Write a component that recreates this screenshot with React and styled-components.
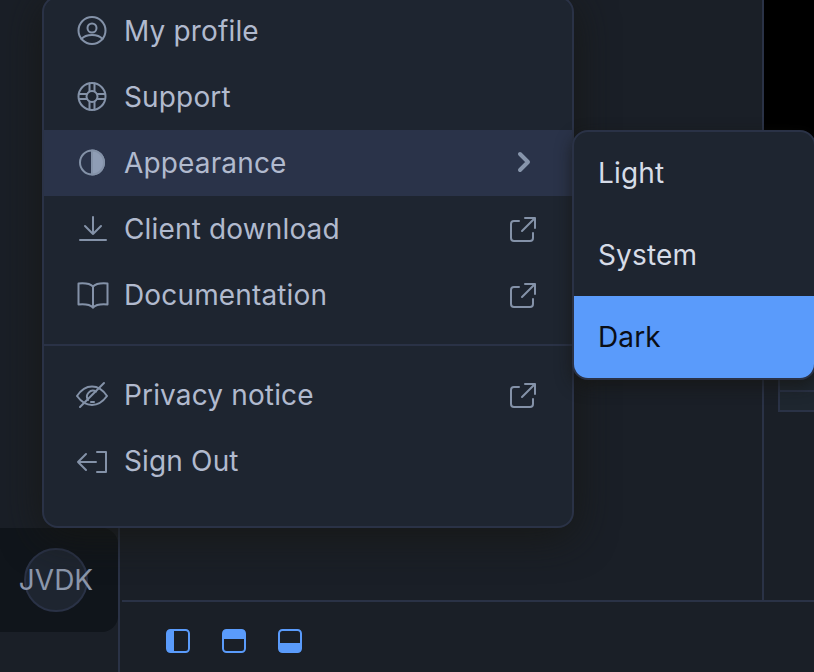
import React from "react";
import styled, { createGlobalStyle } from "styled-components";

const Global = createGlobalStyle`
  html, body { margin: 0; padding: 0; height: 100%; background: #1a1f27; }
  #root { height: 100%; }
  * { box-sizing: border-box; }
`;

const line = "#2a3246";

const Page = styled.div`
  position: relative;
  display: flex;
  width: 814px;
  height: 672px;
  overflow: hidden;
  font-family: Inter, "Liberation Sans", sans-serif;
  background: #1a1f27;
`;

const Rail = styled.aside`
  width: 120px;
  flex: none;
  display: flex;
  flex-direction: column;
  justify-content: flex-end;
  padding-bottom: 40px;
  border-right: 2px solid ${line};
`;

const AvatarSlot = styled.div`
  height: 104px;
  display: flex;
  align-items: center;
  justify-content: center;
  padding-right: 6px;
  background: #10151b;
  border-radius: 0 16px 16px 0;
`;

const Avatar = styled.div`
  width: 64px;
  height: 64px;
  display: flex;
  align-items: center;
  justify-content: center;
  border-radius: 50%;
  background: #1e2530;
  border: 2px solid ${line};
  color: #8c97ab;
  font-size: 28px;
  white-space: nowrap;
`;

const Main = styled.main`
  flex: 1;
  min-width: 0;
  display: flex;
  flex-direction: column;
`;

const Content = styled.div`
  flex: 1;
  min-height: 0;
  display: flex;
  padding-left: 2px;
`;

const Center = styled.div`
  flex: 1;
  border-right: 2px solid ${line};
`;

const Side = styled.div`
  width: 50px;
  flex: none;
  display: flex;
  flex-direction: column;
  padding-bottom: 188px;
`;

const BlackPanel = styled.div`
  flex: 1;
  background: #000;
`;

const TableStub = styled.div`
  height: 42px;
  margin-left: 14px;
  background: #1e262f;
  border: 2px solid ${line};
  border-width: 0 0 2px 2px;
  display: flex;
  flex-direction: column;
`;

const TableRow = styled.div`
  height: 22px;
  border-bottom: 2px solid ${line};
`;

const BottomBar = styled.footer`
  height: 72px;
  flex: none;
  display: flex;
  align-items: center;
  gap: 32px;
  padding: 0 0 0 44px;
  margin-left: 2px;
  border-top: 2px solid ${line};
`;

const PanelIcon = styled.svg`
  width: 24px;
  height: 24px;
  display: block;
  margin-top: 8px;
`;

const Menu = styled.nav`
  position: absolute;
  left: 42px;
  bottom: 144px;
  width: 532px;
  padding-bottom: 32px;
  background: #1e2530;
  border: 2px solid ${line};
  border-radius: 16px;
  box-shadow: 0 8px 40px rgba(22, 22, 18, 0.8);
`;

const Row = styled.div`
  position: relative;
  height: 66px;
  display: flex;
  align-items: center;
  padding: 0 34px 0 32px;
  color: #b1bace;
  font-size: 28px;
  line-height: 1;
  background: ${(p) => (p.$active ? "#2a3349" : "transparent")};
`;

const IconBox = styled.svg`
  width: 34px;
  height: 34px;
  flex: none;
  margin-right: 14px;
  fill: none;
  stroke: #8492a8;
  stroke-width: 2;
  stroke-linecap: round;
  stroke-linejoin: round;
  display: block;
`;

const Label = styled.span`
  flex: 1;
  letter-spacing: 0.15px;
`;

const Trail = styled.svg`
  width: 28px;
  height: 28px;
  flex: none;
  fill: none;
  stroke: ${(p) => (p.$bold ? "#8795ab" : "#8492a8")};
  stroke-width: ${(p) => (p.$bold ? 4 : 2)};
  stroke-linecap: round;
  stroke-linejoin: round;
  display: block;
`;

const Divider = styled.hr`
  margin: 16px 0;
  height: 2px;
  border: 0;
  background: ${line};
`;

const Submenu = styled.div`
  position: absolute;
  top: 0;
  left: 100%;
  width: 244px;
  background: #1e2530;
  border: 2px solid ${line};
  border-radius: 16px;
  box-shadow: 0 6px 16px rgba(22, 22, 18, 0.7);
`;

const SubItem = styled.div`
  height: 82px;
  display: flex;
  align-items: center;
  padding-left: 24px;
  font-size: 28px;
  letter-spacing: 0.15px;
  color: ${(p) => (p.$selected ? "#0a0e15" : "#d6dce7")};
  background: ${(p) => (p.$selected ? "#5a9bfb" : "transparent")};
  border-radius: ${(p) => (p.$selected ? "0 0 14px 14px" : "0")};
`;

const Ext = () => (
  <Trail viewBox="0 0 28 28">
    <path d="M9 6H4A3 3 0 0 0 1 9V23A3 3 0 0 0 4 26H20A3 3 0 0 0 23 23V18" />
    <path d="M12 16L25 3M15 3H25V13" />
  </Trail>
);

const icons = {
  profile: (
    <>
      <circle cx="17" cy="15.500" r="13.500" />
      <circle cx="17" cy="13" r="4.500" />
      <path d="M6.500 24C9 21 13 20 17 20S25 21 27.500 24" />
    </>
  ),
  support: (
    <>
      <circle cx="17" cy="15.500" r="13.500" />
      <circle cx="17" cy="15.500" r="5.500" />
      <path d="M14.500 2.500V10.300M19.500 2.500V10.300M14.500 20.700V28.500M19.500 20.700V28.500M4 13H11.800M4 18H11.800M22.200 13H30M22.200 18H30" />
    </>
  ),
  appearance: (
    <>
      <circle cx="17" cy="15.500" r="12" />
      <path d="M17 3.500A12 12 0 0 1 17 27.500Z" fill="#8f9db5" />
    </>
  ),
  download: (
    <>
      <path d="M5 27H31" />
      <path d="M18 4V21M10 13L18 21L26 13" />
    </>
  ),
  book: (
    <>
      <path d="M18 7.500C15 4.500 9 4 3.500 4.500V25.500C9 25 15 25.500 18 28.500C21 25.500 27 25 32.500 25.500V4.500C27 4 21 4.500 18 7.500Z" />
      <path d="M18 7.500V28.500" />
    </>
  ),
  privacy: (
    <>
      <path d="M2 17C6 11 11 7.500 17 7.500C23 7.500 28 11 32 17C28 22.500 23 26 17 26C11 26 6 22.500 2 17Z" />
      <path d="M13 21A6 6 0 0 1 21 12.500M16 23H19" />
      <path d="M29 4L5 28" />
    </>
  ),
  signout: (
    <>
      <path d="M3 17H21M11 9L3 17L11 25" />
      <path d="M22 7H31V27H22" />
    </>
  ),
};

const items = [
  { key: "profile", label: "My profile" },
  { key: "support", label: "Support" },
  { key: "appearance", label: "Appearance", active: true },
  { key: "download", label: "Client download", ext: true },
  { key: "book", label: "Documentation", ext: true },
];
const lower = [
  { key: "privacy", label: "Privacy notice", ext: true },
  { key: "signout", label: "Sign Out" },
];

const MenuRow = ({ item, children }) => (
  <Row $active={item.active}>
    <IconBox viewBox="1 0 34 32">{icons[item.key]}</IconBox>
    <Label>{item.label}</Label>
    {item.ext && <Ext />}
    {children}
  </Row>
);

export default function App() {
  return (
    <Page>
      <Global />
      <Rail>
        <AvatarSlot>
          <Avatar>JVDK</Avatar>
        </AvatarSlot>
      </Rail>
      <Main>
        <Content>
          <Center />
          <Side>
            <BlackPanel />
            <TableStub>
              <TableRow />
            </TableStub>
          </Side>
        </Content>
        <BottomBar>
          <PanelIcon viewBox="0 0 24 24">
            <rect x="1" y="1" width="22" height="22" rx="3.500" fill="none" stroke="#5a9bfb" strokeWidth="2" />
            <path d="M3.500 1H8V23H3.500A2.500 2.500 0 0 1 1 20.500V3.500A2.500 2.500 0 0 1 3.500 1Z" fill="#5a9bfb" />
          </PanelIcon>
          <PanelIcon viewBox="0 0 24 24">
            <rect x="1" y="1" width="22" height="22" rx="3.500" fill="none" stroke="#5a9bfb" strokeWidth="2" />
            <path d="M1 10V3.500A2.500 2.500 0 0 1 3.500 1H20.500A2.500 2.500 0 0 1 23 3.500V10Z" fill="#5a9bfb" />
          </PanelIcon>
          <PanelIcon viewBox="0 0 24 24">
            <rect x="1" y="1" width="22" height="22" rx="3.500" fill="none" stroke="#5a9bfb" strokeWidth="2" />
            <path d="M1 14V20.500A2.500 2.500 0 0 0 3.500 23H20.500A2.500 2.500 0 0 0 23 20.500V14Z" fill="#5a9bfb" />
          </PanelIcon>
        </BottomBar>
      </Main>
      <Menu>
        {items.map((item) => (
          <MenuRow key={item.key} item={item}>
            {item.active && (
              <>
                <Trail $bold viewBox="0 0 28 28">
                  <path d="M10 5L18 13L10 21" />
                </Trail>
                <Submenu>
                  <SubItem>Light</SubItem>
                  <SubItem>System</SubItem>
                  <SubItem $selected>Dark</SubItem>
                </Submenu>
              </>
            )}
          </MenuRow>
        ))}
        <Divider />
        {lower.map((item) => (
          <MenuRow key={item.key} item={item} />
        ))}
      </Menu>
    </Page>
  );
}
